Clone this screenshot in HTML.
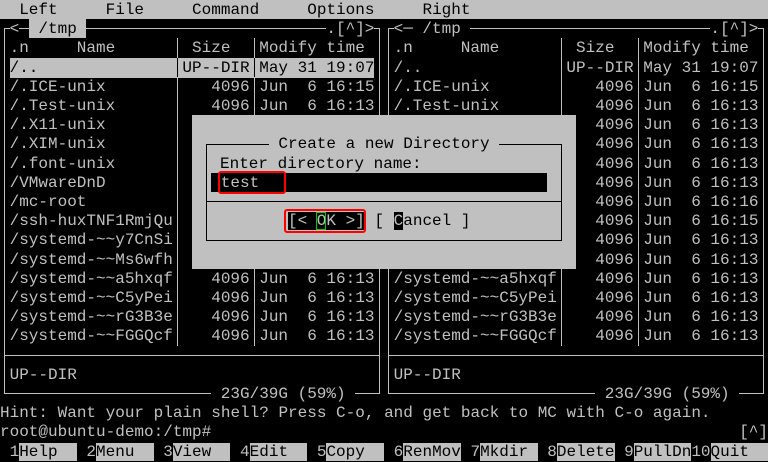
<!DOCTYPE html>
<html><head><meta charset="utf-8"><style>
*{margin:0;padding:0;box-sizing:border-box}
body{width:768px;height:461px;background:#000;overflow:hidden;position:relative;font-family:"Liberation Mono","DejaVu Sans Mono",monospace;font-size:16px;color:#c0c0c0}
.r{position:absolute;height:19.2px;line-height:19.2px;white-space:pre}
.r > *, .r{ }
.tx{position:relative;top:1px}
.l{position:absolute;background:#c0c0c0}
.n{display:inline-block;width:18ch;margin-left:1ch}
.s{display:inline-block;width:7ch;text-align:right}
.t{display:inline-block;width:12ch;margin-left:1ch}
.g{background:#c0c0c0;color:#000}
.k{background:#000;color:#c0c0c0}
.red{position:absolute;border:2px solid #f00;border-radius:3px}
</style></head><body>
<div class="r g" style="top:0;left:0;width:768px;padding-top:1px">  Left     File     Command     Options     Right</div>

<div class="l" style="left:4px;top:28px;width:376px;height:1px"></div>
<div class="l" style="left:4px;top:28px;width:1px;height:366px"></div>
<div class="l" style="left:379px;top:28px;width:1px;height:366px"></div>
<div class="l" style="left:4px;top:393px;width:376px;height:1px"></div>
<div class="l" style="left:4px;top:355px;width:376px;height:1px"></div>
<div class="l" style="left:177px;top:38px;width:1px;height:308px"></div>
<div class="l" style="left:254px;top:38px;width:1px;height:308px"></div>

<div class="l" style="left:388px;top:28px;width:376px;height:1px"></div>
<div class="l" style="left:388px;top:28px;width:1px;height:366px"></div>
<div class="l" style="left:763px;top:28px;width:1px;height:366px"></div>
<div class="l" style="left:388px;top:393px;width:376px;height:1px"></div>
<div class="l" style="left:388px;top:355px;width:376px;height:1px"></div>
<div class="l" style="left:561px;top:38px;width:1px;height:308px"></div>
<div class="l" style="left:638px;top:38px;width:1px;height:308px"></div>

<div class="r" style="top:20.2px;left:9.6px"><span class="k">&lt;</span></div>
<div class="r g" style="top:19.2px;left:28.8px;padding-top:1px"> /tmp </div>
<div class="r k" style="top:20.2px;left:326.4px">.[^]&gt;</div>
<div class="r k" style="top:20.2px;left:393.6px">&lt;─ /tmp </div>
<div class="r k" style="top:20.2px;left:710.4px">.[^]&gt;</div>

<div style="position:absolute;left:0;top:39.4px">
<div class="r" style="top:0"><span class="n">.n     Name</span><span class="s">Size  </span><span class="t">Modify time</span></div>
<div class="r" style="top:18.2px"><span class="g" style="display:inline-block;margin-left:9.6px;width:364.8px;padding-top:1px"><span class="n" style="margin-left:0">/..</span><span class="s">UP--DIR</span><span class="t">May 31 19:07</span></span></div>
<div class="r" style="top:38.4px"><span class="n">/.ICE-unix</span><span class="s">4096</span><span class="t">Jun  6 16:15</span></div>
<div class="r" style="top:57.6px"><span class="n">/.Test-unix</span><span class="s">4096</span><span class="t">Jun  6 16:13</span></div>
<div class="r" style="top:76.8px"><span class="n">/.X11-unix</span><span class="s">4096</span><span class="t">Jun  6 16:13</span></div>
<div class="r" style="top:96px"><span class="n">/.XIM-unix</span><span class="s">4096</span><span class="t">Jun  6 16:13</span></div>
<div class="r" style="top:115.2px"><span class="n">/.font-unix</span><span class="s">4096</span><span class="t">Jun  6 16:13</span></div>
<div class="r" style="top:134.4px"><span class="n">/VMwareDnD</span><span class="s">4096</span><span class="t">Jun  6 16:13</span></div>
<div class="r" style="top:153.6px"><span class="n">/mc-root</span><span class="s">4096</span><span class="t">Jun  6 16:16</span></div>
<div class="r" style="top:172.8px"><span class="n">/ssh-huxTNF1RmjQu</span><span class="s">4096</span><span class="t">Jun  6 16:15</span></div>
<div class="r" style="top:192px"><span class="n">/systemd-~~y7CnSi</span><span class="s">4096</span><span class="t">Jun  6 16:13</span></div>
<div class="r" style="top:211.2px"><span class="n">/systemd-~~Ms6wfh</span><span class="s">4096</span><span class="t">Jun  6 16:13</span></div>
<div class="r" style="top:230.4px"><span class="n">/systemd-~~a5hxqf</span><span class="s">4096</span><span class="t">Jun  6 16:13</span></div>
<div class="r" style="top:249.6px"><span class="n">/systemd-~~C5yPei</span><span class="s">4096</span><span class="t">Jun  6 16:13</span></div>
<div class="r" style="top:268.8px"><span class="n">/systemd-~~rG3B3e</span><span class="s">4096</span><span class="t">Jun  6 16:13</span></div>
<div class="r" style="top:288px"><span class="n">/systemd-~~FGGQcf</span><span class="s">4096</span><span class="t">Jun  6 16:13</span></div>
</div>
<div class="l" style="left:177px;top:57.6px;width:1px;height:19.2px;background:#000"></div>
<div class="l" style="left:254px;top:57.6px;width:1px;height:19.2px;background:#000"></div>

<div style="position:absolute;left:384px;top:39.4px">
<div class="r" style="top:0"><span class="n">.n     Name</span><span class="s">Size  </span><span class="t">Modify time</span></div>
<div class="r" style="top:19.2px"><span class="n">/..</span><span class="s">UP--DIR</span><span class="t">May 31 19:07</span></div>
<div class="r" style="top:38.4px"><span class="n">/.ICE-unix</span><span class="s">4096</span><span class="t">Jun  6 16:15</span></div>
<div class="r" style="top:57.6px"><span class="n">/.Test-unix</span><span class="s">4096</span><span class="t">Jun  6 16:13</span></div>
<div class="r" style="top:76.8px"><span class="n">/.X11-unix</span><span class="s">4096</span><span class="t">Jun  6 16:13</span></div>
<div class="r" style="top:96px"><span class="n">/.XIM-unix</span><span class="s">4096</span><span class="t">Jun  6 16:13</span></div>
<div class="r" style="top:115.2px"><span class="n">/.font-unix</span><span class="s">4096</span><span class="t">Jun  6 16:13</span></div>
<div class="r" style="top:134.4px"><span class="n">/VMwareDnD</span><span class="s">4096</span><span class="t">Jun  6 16:13</span></div>
<div class="r" style="top:153.6px"><span class="n">/mc-root</span><span class="s">4096</span><span class="t">Jun  6 16:16</span></div>
<div class="r" style="top:172.8px"><span class="n">/ssh-huxTNF1RmjQu</span><span class="s">4096</span><span class="t">Jun  6 16:15</span></div>
<div class="r" style="top:192px"><span class="n">/systemd-~~y7CnSi</span><span class="s">4096</span><span class="t">Jun  6 16:13</span></div>
<div class="r" style="top:211.2px"><span class="n">/systemd-~~Ms6wfh</span><span class="s">4096</span><span class="t">Jun  6 16:13</span></div>
<div class="r" style="top:230.4px"><span class="n">/systemd-~~a5hxqf</span><span class="s">4096</span><span class="t">Jun  6 16:13</span></div>
<div class="r" style="top:249.6px"><span class="n">/systemd-~~C5yPei</span><span class="s">4096</span><span class="t">Jun  6 16:13</span></div>
<div class="r" style="top:268.8px"><span class="n">/systemd-~~rG3B3e</span><span class="s">4096</span><span class="t">Jun  6 16:13</span></div>
<div class="r" style="top:288px"><span class="n">/systemd-~~FGGQcf</span><span class="s">4096</span><span class="t">Jun  6 16:13</span></div>
</div>

<div class="r" style="top:365.8px;left:9.6px">UP--DIR</div>
<div class="r" style="top:365.8px;left:393.6px">UP--DIR</div>
<div class="r k" style="top:385px;left:211.2px"> 23G/39G (59%) </div>
<div class="r k" style="top:385px;left:595.2px"> 23G/39G (59%) </div>

<div class="r" style="top:404.2px;left:0">Hint: Want your plain shell? Press C-o, and get back to MC with C-o again.</div>
<div class="r" style="top:423.4px;left:0">root@ubuntu-demo:/tmp#</div>
<div class="r" style="top:423.4px;left:739.2px">[^]</div>
<div class="r" style="top:441.6px;left:0;padding-top:1px"> 1<span class="g">Help  </span> 2<span class="g">Menu  </span> 3<span class="g">View  </span> 4<span class="g">Edit  </span> 5<span class="g">Copy  </span> 6<span class="g">RenMov</span> 7<span class="g">Mkdir </span> 8<span class="g">Delete</span> 9<span class="g">PullDn</span>10<span class="g">Quit  </span></div>

<!-- dialog -->
<div style="position:absolute;left:192px;top:115.2px;width:384px;height:153.6px;background:#c0c0c0"></div>
<div class="l" style="left:206px;top:144px;width:356px;height:1px;background:#000"></div>
<div class="l" style="left:206px;top:144px;width:1px;height:96px;background:#000"></div>
<div class="l" style="left:561px;top:144px;width:1px;height:96px;background:#000"></div>
<div class="l" style="left:206px;top:240px;width:356px;height:1px;background:#000"></div>
<div class="l" style="left:206px;top:201px;width:356px;height:1px;background:#000"></div>
<div class="r g" style="top:134.4px;left:268.8px;padding-top:1px"> Create a new Directory </div>
<div class="r" style="top:154.6px;left:220px;color:#000">Enter directory name:</div>
<div class="r k" style="top:172.8px;left:211.2px;width:336px;padding-top:1px"> test</div>
<div class="r" style="top:212.2px;left:288px;color:#000"><span class="k">[&lt; OK &gt;]</span> [ <span class="k">C</span>ancel ]</div>
<div style="position:absolute;left:316px;top:212px;width:10px;height:18px;border:1px solid #0c0"></div>
<div class="red" style="left:218px;top:171px;width:68px;height:23px"></div>
<div class="red" style="left:284px;top:209px;width:82px;height:24px"></div>
</body></html>
